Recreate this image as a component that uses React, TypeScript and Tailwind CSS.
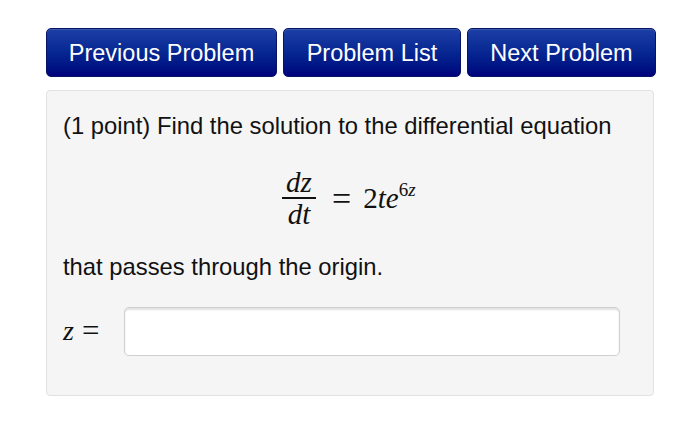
const navButtons = [
  { label: "Previous Problem", width: "w-[231px]" },
  { label: "Problem List", width: "w-[178px]" },
  { label: "Next Problem", width: "w-[189px]" },
];

const mathFont = { fontFamily: '"Liberation Serif", "DejaVu Serif", serif' };

export default function App() {
  return (
    <div className="w-[700px] h-[421px] bg-white font-['Liberation_Sans',Arial,sans-serif] text-[#111]">
      <div className="pl-[46px] pt-[28px] flex gap-[6px]">
        {navButtons.map((b) => (
          <button
            key={b.label}
            className={`${b.width} h-[49px] pt-[3px] rounded-[5px] border border-[#061463] bg-gradient-to-b from-[#1c3fa6] to-[#00027c] text-white text-[23.5px] leading-none shadow-[inset_0_1px_0_rgba(255,255,255,0.15)]`}
          >
            {b.label}
          </button>
        ))}
      </div>

      <div className="ml-[46px] mt-[13px] w-[608px] h-[306px] rounded-[4px] border border-[#e2e2e2] bg-[#f5f5f5] px-[16px] pt-[20px]">
        <p className="text-[23.8px] leading-[30px]">
          (1 point) Find the solution to the differential equation
        </p>

        <div className="mt-[26px] flex items-center italic" style={mathFont}>
          <div className="ml-[219px] w-[34px] flex flex-col items-center">
            <span className="text-[29px] leading-[30px]">dz</span>
            <span className="block h-[1.5px] w-[34px] bg-[#111]"></span>
            <span className="text-[29px] leading-[30px]">dt</span>
          </div>
          <span className="not-italic text-[34px] leading-none ml-[16px] mr-[12px] mt-[2px]">=</span>
          <span className="text-[29px] mt-[2px] leading-none">
            <span className="not-italic">2</span>te
            <span className="text-[19px] relative -top-[12px]">
              <span className="not-italic">6</span>z
            </span>
          </span>
        </div>

        <p className="mt-[23px] text-[23.8px] leading-[30px]">that passes through the origin.</p>

        <div className="mt-[25px] flex items-center">
          <span className="text-[28px] w-[61px] flex items-center" style={mathFont}>
            <span className="italic">z</span>
            <span className="ml-[8px] text-[31px]">=</span>
          </span>
          <div className="w-[496px] h-[49px] rounded-[5px] border border-[#cfcfcf] bg-white shadow-[inset_0_2px_2px_rgba(0,0,0,0.12)]"></div>
        </div>
      </div>
    </div>
  );
}
